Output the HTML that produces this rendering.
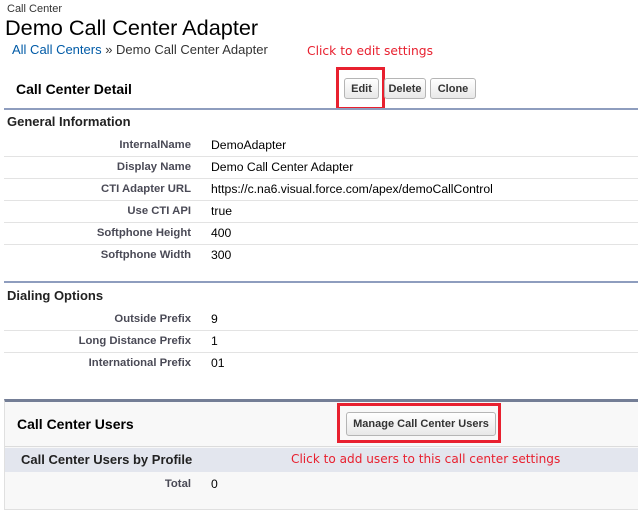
<!DOCTYPE html>
<html><head><style>
body{margin:0;width:638px;height:516px;background:#fff;font-family:"Liberation Sans",Arial,sans-serif;position:relative;overflow:hidden}
.a{position:absolute;white-space:nowrap}
.lbl{position:absolute;right:447px;font-size:11.3px;font-weight:bold;color:#4a4a56}
.val{position:absolute;left:211px;font-size:12.2px;color:#000}
.sep{position:absolute;left:4px;right:0;height:1px;background:#e3e3e3}
.btn{position:absolute;height:21px;border:1px solid #b5b5b5;border-radius:3px;background:linear-gradient(#fff,#e8e8e8);font-size:11px;font-weight:bold;color:#333;text-align:center;line-height:21px;box-sizing:border-box}
.red{color:#e8202f;font-family:"DejaVu Sans",sans-serif;font-size:12.1px}
</style></head><body>
<div class="a" style="left:7px;top:3px;font-size:11px;color:#333">Call Center</div>
<div class="a" style="left:5px;top:15px;font-size:21.7px;color:#000">Demo Call Center Adapter</div>
<div class="a" style="left:12px;top:42px;font-size:13px;color:#015ba7">All Call Centers <span style="color:#333">» Demo Call Center Adapter</span></div>
<div class="a red" style="left:307px;top:44px;font-size:12.3px">Click to edit settings</div>
<div class="a" style="left:336px;top:67px;width:43px;height:37px;border:3px solid #e8202f"></div>
<div class="a" style="left:16px;top:81px;font-size:14px;font-weight:bold;color:#000">Call Center Detail</div>
<div class="btn" style="left:344px;top:78px;width:35px">Edit</div>
<div class="btn" style="left:384px;top:78px;width:42px">Delete</div>
<div class="btn" style="left:430px;top:78px;width:46px">Clone</div>
<div class="a" style="left:4px;right:0;top:108px;height:2px;background:#8e9dbe"></div>
<div class="a" style="left:7px;top:114px;font-size:13px;font-weight:bold;color:#222">General Information</div>
<div class="lbl" style="top:139px">InternalName</div><div class="val" style="top:138px">DemoAdapter</div>
<div class="sep" style="top:156px"></div>
<div class="lbl" style="top:161px">Display Name</div><div class="val" style="top:160px">Demo Call Center Adapter</div>
<div class="sep" style="top:178px"></div>
<div class="lbl" style="top:183px">CTI Adapter URL</div><div class="val" style="top:182px">https://c.na6.visual.force.com/apex/demoCallControl</div>
<div class="sep" style="top:200px"></div>
<div class="lbl" style="top:205px">Use CTI API</div><div class="val" style="top:204px">true</div>
<div class="sep" style="top:222px"></div>
<div class="lbl" style="top:227px">Softphone Height</div><div class="val" style="top:226px">400</div>
<div class="sep" style="top:244px"></div>
<div class="lbl" style="top:249px">Softphone Width</div><div class="val" style="top:248px">300</div>
<div class="a" style="left:4px;right:0;top:281px;height:2px;background:#8e9dbe"></div>
<div class="a" style="left:7px;top:288px;font-size:13px;font-weight:bold;color:#222">Dialing Options</div>
<div class="lbl" style="top:313px">Outside Prefix</div><div class="val" style="top:312px">9</div>
<div class="sep" style="top:330px"></div>
<div class="lbl" style="top:335px">Long Distance Prefix</div><div class="val" style="top:334px">1</div>
<div class="sep" style="top:352px"></div>
<div class="lbl" style="top:357px">International Prefix</div><div class="val" style="top:356px">01</div>
<div class="a" style="left:4px;right:0;top:399px;height:111px;background:#f8f8f8;border-top:3px solid #747e96;border-left:1px solid #e0e0e0;border-bottom:1px solid #e0e0e0;box-sizing:border-box"></div>
<div class="a" style="left:17px;top:416px;font-size:14px;font-weight:bold;color:#000">Call Center Users</div>
<div class="a" style="left:337px;top:403px;width:158px;height:34px;border:3px solid #e8202f"></div>
<div class="btn" style="left:346px;top:412px;width:150px;height:24px;line-height:22px">Manage Call Center Users</div>
<div class="a" style="left:5px;right:0;top:446px;height:1px;background:#dcdcdc"></div>
<div class="a" style="left:5px;right:0;top:448px;height:24px;background:#e3e6ee"></div>
<div class="a" style="left:21px;top:452px;font-size:13px;font-weight:bold;color:#222">Call Center Users by Profile</div>
<div class="a red" style="left:291px;top:452px">Click to add users to this call center settings</div>
<div class="lbl" style="top:478px">Total</div><div class="val" style="top:477px">0</div>
</body></html>
